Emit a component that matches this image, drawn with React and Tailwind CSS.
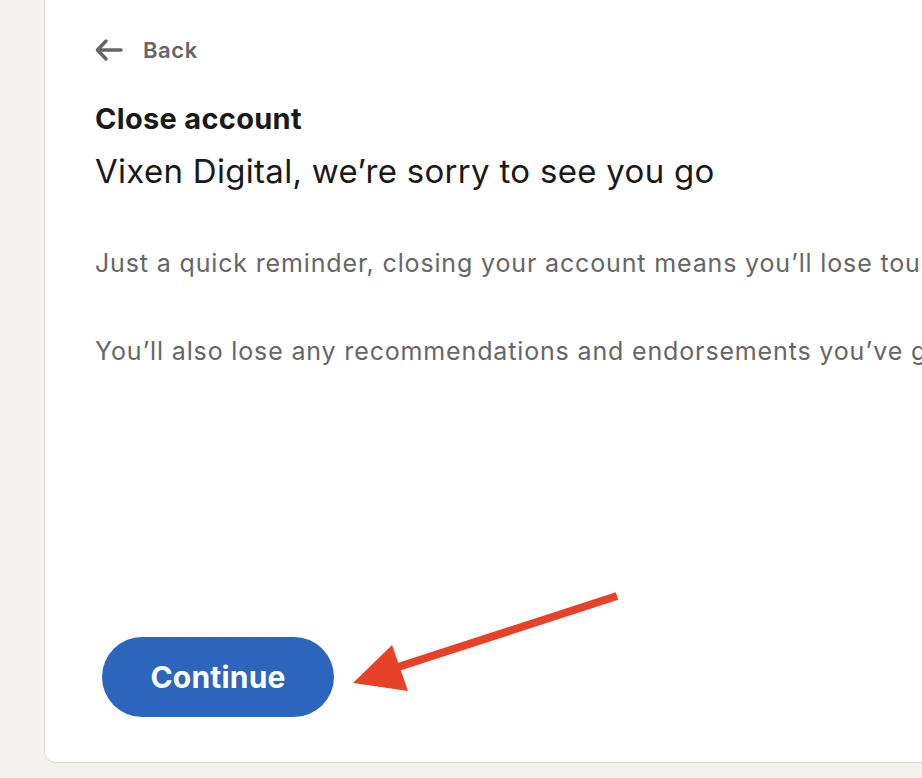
export default function App() {
    return (
        <div className="w-[922px] h-[778px] overflow-hidden bg-[#f3f2ef] relative" style={{ fontFamily: 'Inter, "Noto Sans", sans-serif' }}>
            <div className="ml-[44px] w-[1000px] h-[763px] bg-white border border-t-0 border-[#dcdbd8] rounded-b-[12px] flex flex-col pl-[50px] pt-[33px] pb-[45px]">
                <button className="flex items-center gap-[20px] text-[#666666] h-[34px]">
                    <svg width="28" height="22" viewBox="0 0 28 22" fill="none" stroke="currentColor" strokeWidth="3.4" strokeLinecap="round" strokeLinejoin="round">
                        <path d="M26 11H3" />
                        <path d="M11 2L2.5 11L11 20" />
                    </svg>
                    <span className="text-[22px] font-semibold tracking-[0.6px]">Back</span>
                </button>

                <h1 className="mt-[34px] text-[29px] leading-[36px] font-bold text-[#191919] tracking-[0.3px]">Close account</h1>
                <h2 className="mt-[14px] text-[33px] leading-[40px] text-[#191919] tracking-[0.3px]">Vixen Digital, we’re sorry to see you go</h2>

                <p className="mt-[56px] text-[25px] leading-[32px] text-[#666666] tracking-[0.85px] whitespace-nowrap">
                    Just a quick reminder, closing your account means you’ll lose touch
                </p>
                <p className="mt-[56px] text-[25px] leading-[32px] text-[#666666] tracking-[0.85px] whitespace-nowrap">
                    You’ll also lose any recommendations and endorsements you’ve given
                </p>

                <div className="mt-auto pl-[7px]">
                    <button className="w-[232px] h-[80px] rounded-full bg-[#2d64bc] text-white text-[30px] font-bold tracking-[0.2px]">
                        Continue
                    </button>
                </div>
            </div>

            <svg className="absolute left-0 top-0 pointer-events-none" width="922" height="778" viewBox="0 0 922 778">
                <line x1="617" y1="596" x2="395" y2="668" stroke="#e8412a" strokeWidth="8" />
                <polygon points="353,683 392,645 408,691" fill="#e8412a" />
            </svg>
        </div>
    );
}
